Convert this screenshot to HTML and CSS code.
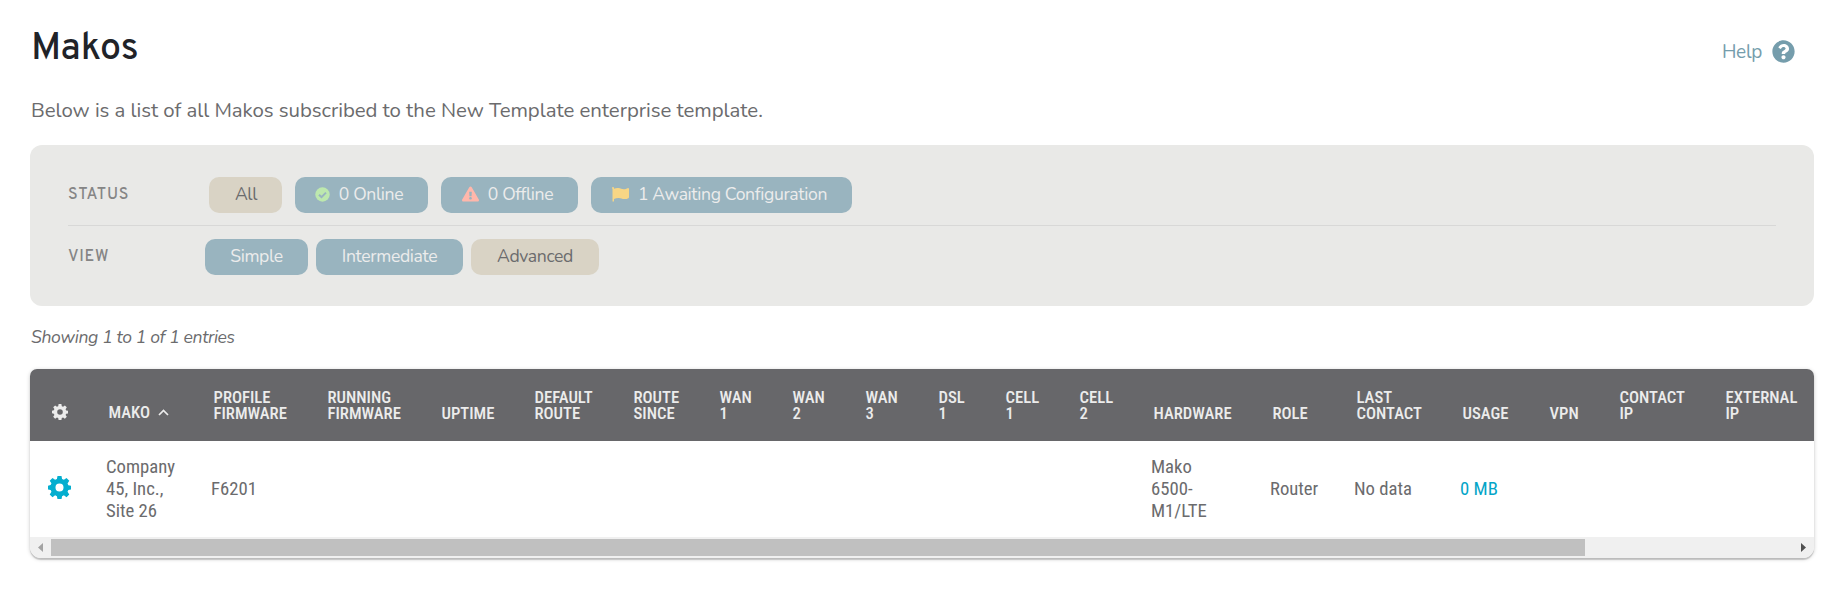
FILE: index.html
```
<!DOCTYPE html>
<html lang="en">
<head>
    <meta charset="UTF-8">
    <meta name="viewport" content="width=device-width, initial-scale=1.0">
    <title>Makos</title>
    <link rel="stylesheet" href="styles.css">
</head>
<body>
    <header class="page-header">
        <h1>Makos</h1>
        <a class="help">
            <span>Help</span>
            <svg width="23" height="23" viewBox="0 0 512 512"><path fill="#759dac" d="M504 256c0 137-111 248-248 248S8 393 8 256 119 8 256 8s248 111 248 248zM262.700 90c-54.500 0-89.300 23-116.500 63.800-3.500 5.300-2.400 12.400 2.700 16.300l34.700 26.300c5.200 3.900 12.600 3 16.700-2.100 17.900-22.700 30.100-35.800 57.300-35.800 20.400 0 45.700 13.100 45.700 33 0 15-12.400 22.700-32.500 34C247.100 238.500 216 254.900 216 296v4c0 6.600 5.400 12 12 12h56c6.600 0 12-5.400 12-12v-1.300c0-28.500 83.200-29.600 83.200-106.700 0-58-60.200-102-116.500-102zM256 338c-25.400 0-46 20.600-46 46s20.600 46 46 46 46-20.600 46-46-20.600-46-46-46z"/></svg>
        </a>
    </header>
    <p class="intro">Below is a list of all Makos subscribed to the New Template enterprise template.</p>

    <div class="filters">
        <div class="filter-row status">
            <span class="label">Status</span>
            <button class="btn active all">All</button>
            <button class="btn online">
                <svg width="15" height="15" viewBox="0 0 15 15"><circle cx="7.500" cy="7.500" r="7.200" fill="#bde8ae"/><path d="M4 7.700l2.500 2.500L11 5.600" fill="none" stroke="#99b4c0" stroke-width="2"/></svg>
                <span>0 Online</span>
            </button>
            <button class="btn offline">
                <svg width="17" height="16" viewBox="0 0 576 512"><path fill="#ffb7ab" fill-rule="evenodd" d="M569.500 440c18.500 32-4.700 72-41.600 72H48.100c-36.900 0-60-40.100-41.600-72L246.400 24c18.500-32 64.700-32 83.200 0l239.900 416zM288 354c-25.400 0-46 20.600-46 46s20.600 46 46 46 46-20.600 46-46-20.600-46-46-46zm-43.700-165.300l7.400 136c.4 6.400 5.700 11.300 12 11.300h48.500c6.300 0 11.600-5 12-11.300l7.400-136c.4-6.900-5.100-12.700-12-12.700h-63.400c-6.900 0-12.300 5.800-12 12.700z"/></svg>
                <span>0 Offline</span>
            </button>
            <button class="btn awaiting">
                <svg width="17" height="15" viewBox="0 0 17 15"><path fill="#f8d685" d="M0 1a1 1 0 0 1 2 0v.8C3.500 1 5 .8 6.500 1c2 .3 3.500 1.300 5.500 1.200 1.400 0 2.500-.5 3.700-1 .7-.3 1.300.1 1.300.8v8.200c0 .5-.2.800-.6 1-1.300.6-2.600 1-4 .9-2.200-.1-3.700-1.200-5.700-1.200-1.800 0-3.300.4-4.700 1.100V14.500H.5V2z"/></svg>
                <span>1 Awaiting Configuration</span>
            </button>
        </div>
        <div class="filter-row view">
            <span class="label">View</span>
            <button class="btn simple">Simple</button>
            <button class="btn intermediate">Intermediate</button>
            <button class="btn active advanced">Advanced</button>
        </div>
    </div>

    <p class="showing">Showing 1 to 1 of 1 entries</p>

    <div class="table-wrap">
        <table>
            <colgroup>
                <col class="w59"><col class="w105"><col class="w114"><col class="w114"><col class="w93">
                <col class="w99"><col class="w86"><col class="w73"><col class="w73"><col class="w73">
                <col class="w67"><col class="w74"><col class="w74"><col class="w119"><col class="w84">
                <col class="w106"><col class="w87"><col class="w70"><col class="w106"><col>
            </colgroup>
            <thead>
                <tr>
                    <th class="gear"><svg width="16" height="16" viewBox="0 0 24 24"><use href="#cog"/></svg></th>
                    <th class="sorted">Mako <svg width="11" height="7" viewBox="0 0 11 7"><path d="M1 6l4.500-4.500L10 6" fill="none" stroke="#ececec" stroke-width="1.700"/></svg></th>
                    <th>Profile<br>Firmware</th>
                    <th>Running<br>Firmware</th>
                    <th>Uptime</th>
                    <th>Default<br>Route</th>
                    <th>Route<br>Since</th>
                    <th>WAN<br>1</th>
                    <th>WAN<br>2</th>
                    <th>WAN<br>3</th>
                    <th>DSL<br>1</th>
                    <th>Cell<br>1</th>
                    <th>Cell<br>2</th>
                    <th>Hardware</th>
                    <th>Role</th>
                    <th>Last<br>Contact</th>
                    <th>Usage</th>
                    <th>VPN</th>
                    <th>Contact<br>IP</th>
                    <th>External<br>IP</th>
                </tr>
            </thead>
            <tbody>
                <tr>
                    <td class="gear"><svg width="23" height="23" viewBox="0 0 24 24"><path id="cog" fill="currentColor" fill-rule="evenodd" d="M9.900 0h4.200l.6 3.200 1.900.8 2.700-1.900 2.900 2.900-1.800 2.700.8 1.900 3.200.6v3.800l-3.200.6-.8 1.900 1.800 2.700-2.900 2.900-2.700-1.900-1.900.8-.6 3.200H9.900l-.6-3.200-1.900-.8-2.700 1.900-2.900-2.900 1.800-2.700-.8-1.900L0 14v-3.800l2.800-.8.8-1.900L1.800 5l2.900-2.900L7.400 4l1.900-.8zM12 7.800a4.200 4.200 0 1 0 0 8.400 4.200 4.200 0 0 0 0-8.400z"/></svg></td>
                    <td>Company<br>45, Inc.,<br>Site 26</td>
                    <td>F6201</td>
                    <td></td>
                    <td></td>
                    <td></td>
                    <td></td>
                    <td></td>
                    <td></td>
                    <td></td>
                    <td></td>
                    <td></td>
                    <td></td>
                    <td>Mako<br>6500-<br>M1/LTE</td>
                    <td>Router</td>
                    <td>No data</td>
                    <td><a class="usage">0 MB</a></td>
                    <td></td>
                    <td></td>
                    <td></td>
                </tr>
            </tbody>
        </table>
        <div class="scrollbar">
            <svg class="arrow" width="21" height="21" viewBox="0 0 21 21"><path d="M13 6v9l-5-4.500z" fill="#a3a3a3"/></svg>
            <div class="track"><div class="thumb"></div></div>
            <svg class="arrow" width="21" height="21" viewBox="0 0 21 21"><path d="M8 6v9l5-4.500z" fill="#505050"/></svg>
        </div>
    </div>
</body>
</html>
```
FILE: styles.css
```
* {
    box-sizing: border-box;
}
body {
    margin: 0;
    padding: 0 33px 30px 30px;
    background-color: #fff;
    color: #6b6b6d;
    font-family: Nunito, Lato, sans-serif;
}
.page-header {
    display: flex;
    justify-content: space-between;
    height: 88px;
    padding: 22px 19px 0 1px;
}
h1 {
    margin: 0;
    color: #212328;
    font: 500 37.6px/55px Overpass, Roboto, sans-serif;
}
.help {
    display: flex;
    align-items: center;
    gap: 10px;
    height: 59px;
    color: #759dac;
    font-size: 19px;
    letter-spacing: -.3px;
}
.intro {
    margin: 0;
    height: 57px;
    padding-left: 1px;
    font-size: 20.4px;
    line-height: 45px;
    letter-spacing: -.04px;
    white-space: nowrap;
}

/* filter panel */
.filters {
    height: 161px;
    padding: 32px 38px 0;
    border-radius: 12px;
    background-color: #e9e9e7;
}
.filter-row {
    display: flex;
}
.status {
    height: 49px;
    gap: 13px;
    border-bottom: 1px solid #d8d8d7;
}
.view {
    padding-top: 13px;
    gap: 8px;
}
.label {
    width: 128px;
    color: #858585;
    font: 500 16px/36px Overpass, "Roboto Condensed", Roboto, sans-serif;
    letter-spacing: .8px;
    text-transform: uppercase;
}
.view .label {
    width: 129px;
}
.btn {
    display: flex;
    align-items: center;
    justify-content: center;
    height: 36px;
    padding: 0 0 2px;
    border: none;
    border-radius: 10px;
    background-color: #99b4bf;
    color: #ececec;
    font-family: inherit;
    font-size: 17.6px;
    letter-spacing: -.35px;
    white-space: nowrap;
}
.btn svg {
    margin-right: 9px;
}
.btn.active {
    background-color: #d9d3c5;
    color: #6b6b6d;
}
.all { width: 73px; padding-left: 1px; }
.online { width: 133px; padding-right: 5px; }
.offline { width: 137px; padding-right: 4px; }
.awaiting { width: 261px; padding-right: 4px; }
.simple { width: 103px; }
.intermediate { width: 147px; }
.advanced { width: 128px; }

.showing {
    margin: 0;
    height: 63px;
    padding-left: 1px;
    font-size: 17.6px;
    font-style: italic;
    line-height: 63px;
    letter-spacing: -.37px;
}

/* table */
.table-wrap {
    height: 189px;
    border-radius: 7px 7px 11px 11px;
    overflow: hidden;
    box-shadow: 0 1px 4px rgba(0, 0, 0, .2), 0 2px 1px rgba(0, 0, 0, .16);
}
table {
    width: 100%;
    table-layout: fixed;
    border-collapse: collapse;
    font-family: "Roboto Condensed", Roboto, sans-serif;
    white-space: nowrap;
}
th {
    height: 72px;
    padding: 0 0 19px 19.5px;
    background-color: #67676a;
    color: #ececec;
    font-size: 16.7px;
    font-weight: 500;
    line-height: 16px;
    text-align: left;
    text-transform: uppercase;
    vertical-align: bottom;
}
th.sorted {
    padding-bottom: 20px;
}
th.sorted svg {
    margin: 0 0 2px 4px;
}
td {
    height: 96px;
    padding: 0 0 1px 17px;
    font-size: 18.7px;
    line-height: 22px;
}
th.gear {
    padding: 0 0 21px 22px;
}
td.gear {
    padding: 0 0 3px 18px;
    color: #04aecf;
}
.gear svg {
    display: block;
}
.usage {
    color: #04a5c8;
}
.w59 { width: 59px; }
.w67 { width: 67px; }
.w70 { width: 70px; }
.w73 { width: 73px; }
.w74 { width: 74px; }
.w84 { width: 84px; }
.w86 { width: 86px; }
.w87 { width: 87px; }
.w93 { width: 93px; }
.w99 { width: 99px; }
.w105 { width: 105px; }
.w106 { width: 106px; }
.w114 { width: 114px; }
.w119 { width: 119px; }

.scrollbar {
    display: flex;
    height: 21px;
    background-color: #f0f0f0;
}
.track {
    flex: 1;
    padding: 2px 0;
}
.thumb {
    width: 1534px;
    height: 17px;
    background-color: #c0c0c0;
}
```
